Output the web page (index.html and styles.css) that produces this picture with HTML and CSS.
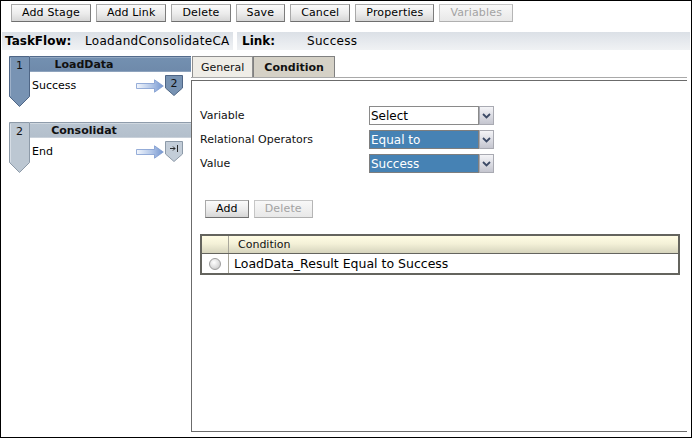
FILE: index.html
```html
<!DOCTYPE html>
<html>
<head>
<meta charset="utf-8">
<link rel="stylesheet" href="styles.css">
</head>
<body>
<div class="frame">
  <div class="toolbar">
    <button class="btn">Add Stage</button>
    <button class="btn">Add Link</button>
    <button class="btn">Delete</button>
    <button class="btn">Save</button>
    <button class="btn">Cancel</button>
    <button class="btn">Properties</button>
    <button class="btn btn-disabled">Variables</button>
  </div>
  <div class="infobar">
    <div class="info-seg seg-task"><span class="info-label">TaskFlow:</span><span class="info-value">LoadandConsolidateCA</span></div>
    <div class="info-seg seg-link"><span class="info-label">Link:</span><span class="info-value">Success</span></div>
  </div>
  <div class="main">
    <div class="stages">
      <div class="stage stage-active">
        <div class="stage-col">
          <svg width="21" height="51" viewBox="0 0 21 51">
            <polygon points="0.5,0.5 20.5,0.5 20.5,40.5 10.5,50.5 0.5,40.5" fill="#7893b3" stroke="#4f6686"/>
            <line x1="1.5" y1="2" x2="1.5" y2="40" stroke="#9db0c8"/>
            <text x="10.5" y="12.5" text-anchor="middle" class="stage-num">1</text>
          </svg>
        </div>
        <div class="stage-main">
          <div class="stage-head"><span class="stage-title">LoadData</span></div>
          <div class="stage-body">
            <span class="stage-label">Success</span>
            <svg class="link-arrow" width="28" height="14" viewBox="0 0 28 14">
              <defs>
                <linearGradient id="ag1" x1="0" y1="0" x2="1" y2="0">
                  <stop offset="0" stop-color="#f2f6fc"/>
                  <stop offset="0.55" stop-color="#b3c7e8"/>
                  <stop offset="1" stop-color="#7596cf"/>
                </linearGradient>
              </defs>
              <polygon points="0.5,4.5 18.5,4.5 18.5,0.8 27.3,7 18.5,13.2 18.5,9.5 0.5,9.5" fill="url(#ag1)" stroke="#7d9bcf" stroke-width="0.8"/>
            </svg>
            <svg class="link-box" width="18" height="21" viewBox="0 0 18 21">
              <polygon points="0.5,0.5 17.5,0.5 17.5,13 9,20.5 0.5,13" fill="#7893b3" stroke="#4f6686"/>
              <text x="9" y="11.5" text-anchor="middle" class="stage-num">2</text>
            </svg>
          </div>
        </div>
      </div>
      <div class="stage stage-idle">
        <div class="stage-col">
          <svg width="21" height="51" viewBox="0 0 21 51">
            <polygon points="0.5,0.5 20.5,0.5 20.5,40.5 10.5,50.5 0.5,40.5" fill="#bcc7d2" stroke="#8d9aa8"/>
            <line x1="1.5" y1="2" x2="1.5" y2="40" stroke="#d6dde5"/>
            <text x="10.5" y="12.5" text-anchor="middle" class="stage-num">2</text>
          </svg>
        </div>
        <div class="stage-main">
          <div class="stage-head"><span class="stage-title">Consolidat</span></div>
          <div class="stage-body">
            <span class="stage-label">End</span>
            <svg class="link-arrow" width="28" height="14" viewBox="0 0 28 14">
              <defs>
                <linearGradient id="ag2" x1="0" y1="0" x2="1" y2="0">
                  <stop offset="0" stop-color="#f2f6fc"/>
                  <stop offset="0.55" stop-color="#b3c7e8"/>
                  <stop offset="1" stop-color="#7596cf"/>
                </linearGradient>
              </defs>
              <polygon points="0.5,4.5 18.5,4.5 18.5,0.8 27.3,7 18.5,13.2 18.5,9.5 0.5,9.5" fill="url(#ag2)" stroke="#7d9bcf" stroke-width="0.8"/>
            </svg>
            <svg class="link-box" width="18" height="21" viewBox="0 0 18 21">
              <polygon points="0.5,0.5 17.5,0.5 17.5,13 9,20.5 0.5,13" fill="#c3cdd8" stroke="#8d9aa8"/>
              <line x1="5" y1="7.5" x2="10" y2="7.5" stroke="#2a2a2a"/>
              <polyline points="8,5.5 10,7.5 8,9.5" fill="none" stroke="#2a2a2a"/>
              <line x1="12.5" y1="4" x2="12.5" y2="11" stroke="#2a2a2a"/>
            </svg>
          </div>
        </div>
      </div>
    </div>
    <div class="editor">
      <div class="tabs">
        <div class="tab">General</div>
        <div class="tab tab-selected">Condition</div>
      </div>
      <div class="editor-body">
        <div class="form">
          <span class="form-label">Variable</span>
          <span class="select">Select</span>
          <span class="select-btn"><svg width="9" height="6" viewBox="0 0 9 6"><polyline points="1,1 4.5,4.5 8,1" fill="none" stroke="#3c4a66" stroke-width="1.8"/></svg></span>
          <span class="form-label">Relational Operators</span>
          <span class="select select-filled">Equal to</span>
          <span class="select-btn"><svg width="9" height="6" viewBox="0 0 9 6"><polyline points="1,1 4.5,4.5 8,1" fill="none" stroke="#3c4a66" stroke-width="1.8"/></svg></span>
          <span class="form-label">Value</span>
          <span class="select select-filled">Success</span>
          <span class="select-btn"><svg width="9" height="6" viewBox="0 0 9 6"><polyline points="1,1 4.5,4.5 8,1" fill="none" stroke="#3c4a66" stroke-width="1.8"/></svg></span>
        </div>
        <div class="actions">
          <button class="btn">Add</button>
          <button class="btn btn-disabled">Delete</button>
        </div>
        <div class="cond-table">
          <div class="cond-head">
            <span class="cell-sel"></span>
            <span class="cell-text head-text">Condition</span>
          </div>
          <div class="cond-row">
            <span class="cell-sel"><span class="radio"></span></span>
            <span class="cell-text row-text">LoadData_Result Equal to Success</span>
          </div>
        </div>
      </div>
    </div>
  </div>
</div>
</body>
</html>
```
FILE: styles.css
```css
body {
  margin: 0;
  font-family: "DejaVu Sans", Verdana, sans-serif;
  font-size: 11px;
  color: #000;
  background: #fff;
}

.frame {
  width: 692px;
  height: 438px;
  border: 1px solid #000;
  box-sizing: border-box;
  display: flex;
  flex-direction: column;
  overflow: hidden;
}

/* toolbar */
.toolbar {
  display: flex;
  gap: 5px;
  padding: 3px 0 0 10px;
}

.btn {
  height: 18px;
  margin: 0;
  padding: 0 10px;
  box-sizing: border-box;
  font-family: "DejaVu Sans", Verdana, sans-serif;
  font-size: 11px;
  letter-spacing: 0.15px;
  line-height: 16px;
  color: #000;
  border: 1px solid;
  border-color: #a9a9a9 #7c7c7c #6f6f6f #a9a9a9;
  background: linear-gradient(#fbfbfb, #ebebeb 55%, #d6d6d6);
  border-radius: 0;
}

.btn-disabled {
  color: #a3a3a3;
  border-color: #c6c6c6 #b5b5b5 #b0b0b0 #c6c6c6;
  background: linear-gradient(#f8f8f8, #e8e8e8);
}

/* task flow info bar */
.infobar {
  display: flex;
  gap: 4px;
  height: 18px;
  margin: 10px 1px 0 1px;
  font-size: 12px;
}

.info-seg {
  display: flex;
  align-items: center;
  background: linear-gradient(#dbe0e6, #e8ebef 60%, #f0f2f4);
}

.seg-task {
  width: 231px;
  padding-left: 3px;
  box-sizing: border-box;
  flex: none;
}

.seg-link {
  flex: 1;
  padding-left: 5px;
}

.info-label {
  font-weight: bold;
  width: 80px;
  flex: none;
}

.seg-link .info-label {
  width: 65px;
}

.info-value {
  white-space: nowrap;
  letter-spacing: 0.3px;
}

/* main area */
.main {
  display: flex;
  height: 377px;
  margin-top: 5px;
}

.stages {
  width: 190px;
  flex: none;
  padding: 1px 0 0 8px;
  box-sizing: border-box;
  overflow: hidden;
}

.stage {
  display: flex;
  height: 51px;
}

.stage + .stage {
  margin-top: 15px;
}

.stage-col {
  width: 21px;
  flex: none;
}

.stage-col svg {
  display: block;
}

.stage-num {
  font-size: 11px;
  fill: #111;
}

.stage-main {
  flex: 1;
  min-width: 0;
  display: flex;
  flex-direction: column;
}

.stage-head {
  height: 16px;
  box-sizing: border-box;
  border-top: 1px solid;
  border-bottom: 1px solid;
  font-weight: bold;
  line-height: 15px;
  white-space: nowrap;
}

.stage-active .stage-head {
  border-color: #536b8b #8ea3bd #8ea3bd;
  background: linear-gradient(#94a9c3 0, #94a9c3 1px, #7390b0 1px, #6f8aab 100%);
}

.stage-idle .stage-head {
  border-color: #8f9cab #c9d1da #c9d1da;
  background: linear-gradient(#d0d8e0 0, #d0d8e0 1px, #b9c5d1 1px, #b3bfcc 100%);
}

.stage-title {
  display: inline-block;
  width: 108px;
  text-align: center;
  color: #111;
}

.stage-body {
  display: flex;
  align-items: center;
  height: 27px;
}

.stage-label {
  width: 104px;
  padding-left: 2px;
  flex: none;
}

.link-arrow,
.link-box {
  display: block;
  flex: none;
}

.link-box {
  margin-left: 1px;
}

/* editor */
.editor {
  width: 496px;
  flex: none;
  display: flex;
  flex-direction: column;
}

.tabs {
  display: flex;
  align-items: flex-end;
  height: 22px;
  padding-left: 1px;
  border-bottom: 1px solid #a9a9a9;
}

.tab {
  height: 21px;
  box-sizing: border-box;
  padding: 0 8px;
  line-height: 21px;
  border: 1px solid #8f8f8f;
  border-bottom: none;
  background: #efede7;
  color: #111;
}

.tab-selected {
  padding: 0 10px;
  font-weight: bold;
  background: #d5d1c6;
  border-color: #808080;
}

.editor-body {
  flex: 1;
  margin-top: 2px;
  border: 1px solid #6b6b6b;
  border-right: none;
  padding: 25px 0 0 8px;
}

.form {
  display: grid;
  grid-template-columns: 169px 110px 15px;
  grid-auto-rows: 19px;
  row-gap: 5px;
  align-items: center;
}

.form-label {
  color: #111;
  line-height: 20px;
}

.select {
  height: 19px;
  box-sizing: border-box;
  border: 1px solid #8a8a8a;
  padding-left: 1px;
  font-size: 12px;
  line-height: 18px;
  background: #fff;
}

.select-filled {
  background: #4682b4;
  color: #fff;
  border-color: #7e7e7e;
}

.select-btn {
  height: 19px;
  box-sizing: border-box;
  border: 1px solid #a9aab2;
  background: linear-gradient(#f4f4f7, #dcdde4 50%, #c4c5cf);
  display: flex;
  align-items: center;
  justify-content: center;
}

.select-btn svg {
  display: block;
}

.actions {
  display: flex;
  gap: 5px;
  margin: 27px 0 0 5px;
}

/* condition table */
.cond-table {
  width: 480px;
  box-sizing: border-box;
  border: 2px solid #64645e;
  margin-top: 16px;
}

.cond-head {
  display: flex;
  height: 17px;
  border-bottom: 1px solid #64645e;
  background: linear-gradient(#fffce4, #f4f1d8 45%, #d6d4bd);
  line-height: 18px;
}

.cond-row {
  display: flex;
  height: 19px;
  align-items: center;
}

.cell-sel {
  width: 26px;
  height: 100%;
  flex: none;
  border-right: 1px solid #a9a79b;
  display: flex;
  align-items: center;
  justify-content: center;
}

.cell-text {
  flex: 1;
  white-space: nowrap;
}

.head-text {
  padding-left: 9px;
  color: #111;
}

.row-text {
  padding-left: 5px;
  font-size: 12.5px;
  line-height: 20px;
}

.radio {
  width: 12px;
  height: 12px;
  box-sizing: border-box;
  border-radius: 50%;
  border: 1px solid #9c9c9c;
  background: radial-gradient(circle at 40% 35%, #ffffff, #dadada 60%, #b9b9b9);
}
```
